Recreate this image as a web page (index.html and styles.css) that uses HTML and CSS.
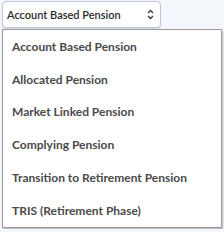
FILE: index.html
```html
<!DOCTYPE html>
<html lang="en">
<head>
<meta charset="UTF-8" />
<title>Pension Type</title>
<link rel="stylesheet" href="styles.css">
</head>
<body>

<div class="picker">
  <div class="select">
    <span class="select-value">Account Based Pension</span>
    <svg class="select-arrow" width="7" height="11" viewBox="0 0 7 11">
      <path d="M1 4 L3.5 1.5 L6 4 M1 7 L3.5 9.5 L6 7" fill="none" stroke="#3a3a3a" stroke-width="1.3" />
    </svg>
  </div>

  <ul class="menu">
    <li>Account Based Pension</li>
    <li>Allocated Pension</li>
    <li>Market Linked Pension</li>
    <li>Complying Pension</li>
    <li>Transition to Retirement Pension</li>
    <li>TRIS (Retirement Phase)</li>
  </ul>
</div>

</body>
</html>
```

FILE: styles.css
```css
* {
  box-sizing: border-box;
}
body {
  margin: 0;
  padding: 1px 2px;
  background: #f3f7fb;
  font-family: Lato, 'Open Sans', sans-serif;
}
.picker {
  width: 220px;
}
.select {
  width: 159px;
  height: 27px;
  display: flex;
  align-items: center;
  justify-content: space-between;
  padding: 0 6px 0 4px;
  background: #fff;
  border: 1px solid #bcc6d4;
  border-radius: 4px;
  box-shadow: 0 1px 1px rgb(0 0 0 / 0.12);
  font-size: 11px;
  font-weight: 600;
  color: #2b2b2b;
}
.select-arrow {
  margin-top: -1px;
}
.menu {
  list-style: none;
  margin: 1px 0 0;
  padding: 0;
  background: #fff;
  border: 1px solid #9a9a9a;
  box-shadow: 1px 2px 2px rgb(0 0 0 / 0.25);
}
.menu li {
  height: 32.8px;
  display: flex;
  align-items: center;
  padding: 0 9px;
  font-size: 12px;
  font-weight: 700;
  color: #4a4a4a;
}
```
